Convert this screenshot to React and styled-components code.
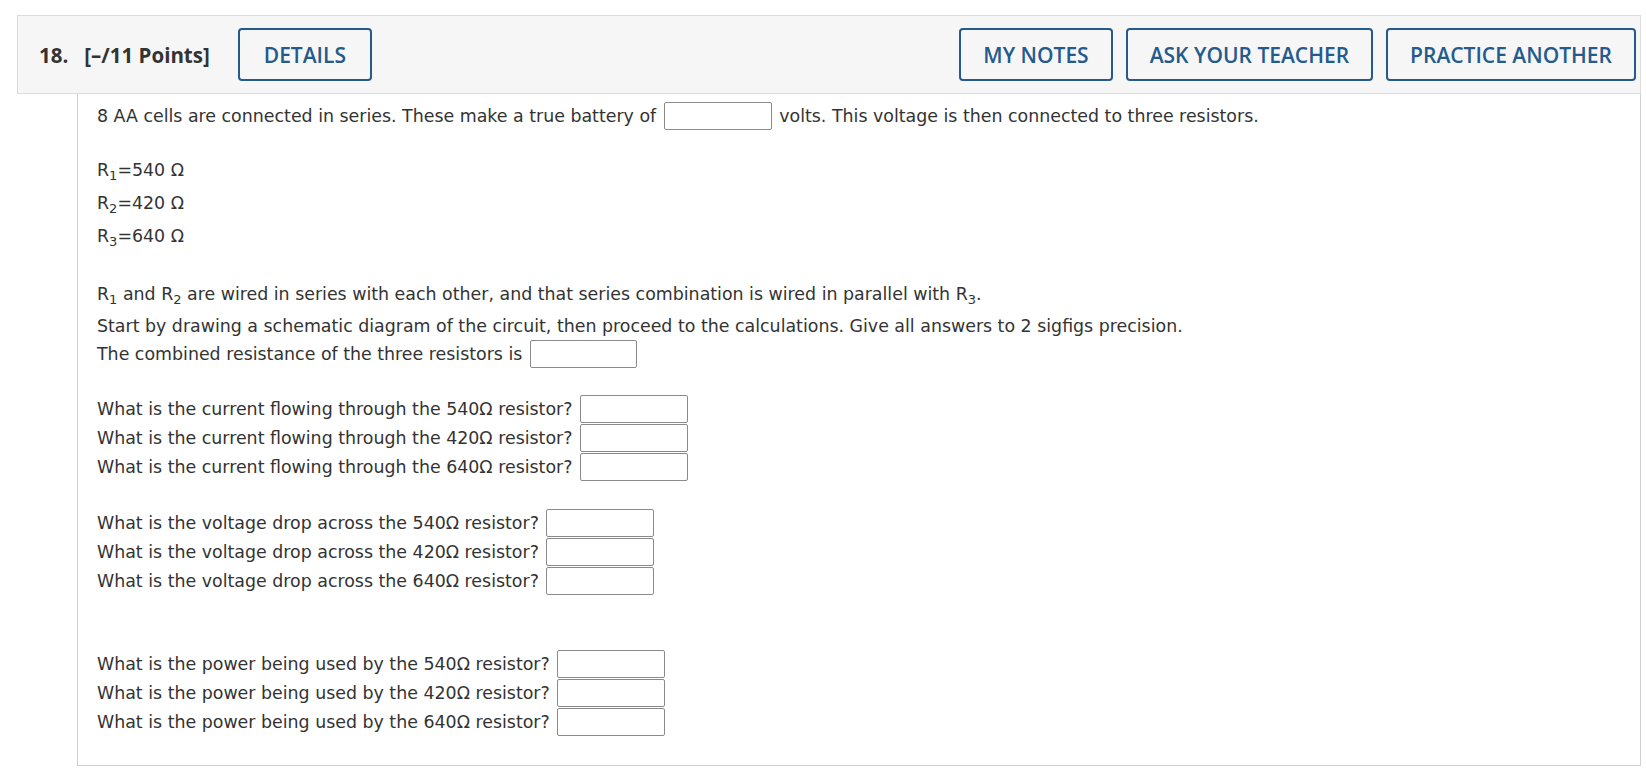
import React from 'react';
import styled, { createGlobalStyle } from 'styled-components';

const Global = createGlobalStyle`
  body {
    margin: 0;
    background: #fff;
    color: #333;
  }
`;

const Page = styled.div`
  padding: 15px 5px 0 17px;
`;

const Header = styled.div`
  display: flex;
  align-items: center;
  height: 79px;
  box-sizing: border-box;
  padding: 0 4px 0 21px;
  background: #f6f6f6;
  border: 1px solid #dcdcdc;
  font-family: "Open Sans", sans-serif;
`;

const Title = styled.div`
  display: flex;
  font-size: 20.5px;
  font-weight: 700;
  color: #333;
  span + span {
    margin-left: 16px;
  }
`;

const Actions = styled.div`
  display: flex;
  gap: 13px;
  margin-left: auto;
`;

const Button = styled.button`
  height: 53px;
  padding: 0 ${p => p.$pad || 22}px;
  margin-left: ${p => p.$offset || 0}px;
  background: transparent;
  border: 2px solid #255a8c;
  border-radius: 4px;
  color: #255a8c;
  font-family: "Open Sans", sans-serif;
  font-size: 21px;
  font-weight: 600;
  cursor: pointer;
`;

const Body = styled.div`
  margin-left: 60px;
  padding: 8px 0 29px 19px;
  border: 1px solid #d0d0d0;
  border-top: none;
  font-family: "DejaVu Sans", Verdana, sans-serif;
  font-size: 17.4px;
`;

const Row = styled.div`
  height: 28px;
  line-height: 28px;
  white-space: nowrap;
  margin-top: ${p => p.$top || 0}px;
`;

const Line = styled.div`
  line-height: ${p => p.$lh || 32}px;
  margin-top: ${p => p.$top || 0}px;
  white-space: nowrap;
`;

const Group = styled.div`
  display: flex;
  flex-direction: column;
  gap: 1px;
  margin-top: ${p => p.$top || 0}px;
`;

const Box = styled.input`
  display: inline-block;
  vertical-align: top;
  box-sizing: border-box;
  width: ${p => p.$w || 108}px;
  height: 28px;
  margin: 0 2px;
  border: 1px solid #8a8a8a;
  border-radius: 2px;
  background: #fff;
  font: inherit;
`;

const Sub = styled.sub`
  font-size: 13px;
  line-height: 0;
  vertical-align: -4px;
`;

const resistors = ['540', '420', '640'];

export default function App() {
  return (
    <Page>
      <Global />
      <Header>
        <Title>
          <span>18.</span>
          <span>[–/11 Points]</span>
        </Title>
        <Button $offset={28} $pad={24}>DETAILS</Button>
        <Actions>
          <Button>MY NOTES</Button>
          <Button>ASK YOUR TEACHER</Button>
          <Button>PRACTICE ANOTHER</Button>
        </Actions>
      </Header>
      <Body>
        <Row>
          8 AA cells are connected in series. These make a true battery of <Box /> volts. This voltage is then connected to three resistors.
        </Row>

        <Group $top={24}>
          <Line>R<Sub>1</Sub>=540 Ω</Line>
          <Line>R<Sub>2</Sub>=420 Ω</Line>
          <Line>R<Sub>3</Sub>=640 Ω</Line>
        </Group>

        <Line $top={26}>
          R<Sub>1</Sub> and R<Sub>2</Sub> are wired in series with each other, and that series combination is wired in parallel with R<Sub>3</Sub>.
        </Line>
        <Line $lh={28} $top={2}>
          Start by drawing a schematic diagram of the circuit, then proceed to the calculations. Give all answers to 2 sigfigs precision.
        </Line>
        <Row>The combined resistance of the three resistors is <Box $w={107} /></Row>

        <Group $top={27}>
          {resistors.map(r => (
            <Row key={r}>What is the current flowing through the {r}Ω resistor? <Box /></Row>
          ))}
        </Group>

        <Group $top={28}>
          {resistors.map(r => (
            <Row key={r}>What is the voltage drop across the {r}Ω resistor? <Box /></Row>
          ))}
        </Group>

        <Group $top={55}>
          {resistors.map(r => (
            <Row key={r}>What is the power being used by the {r}Ω resistor? <Box /></Row>
          ))}
        </Group>
      </Body>
    </Page>
  );
}
